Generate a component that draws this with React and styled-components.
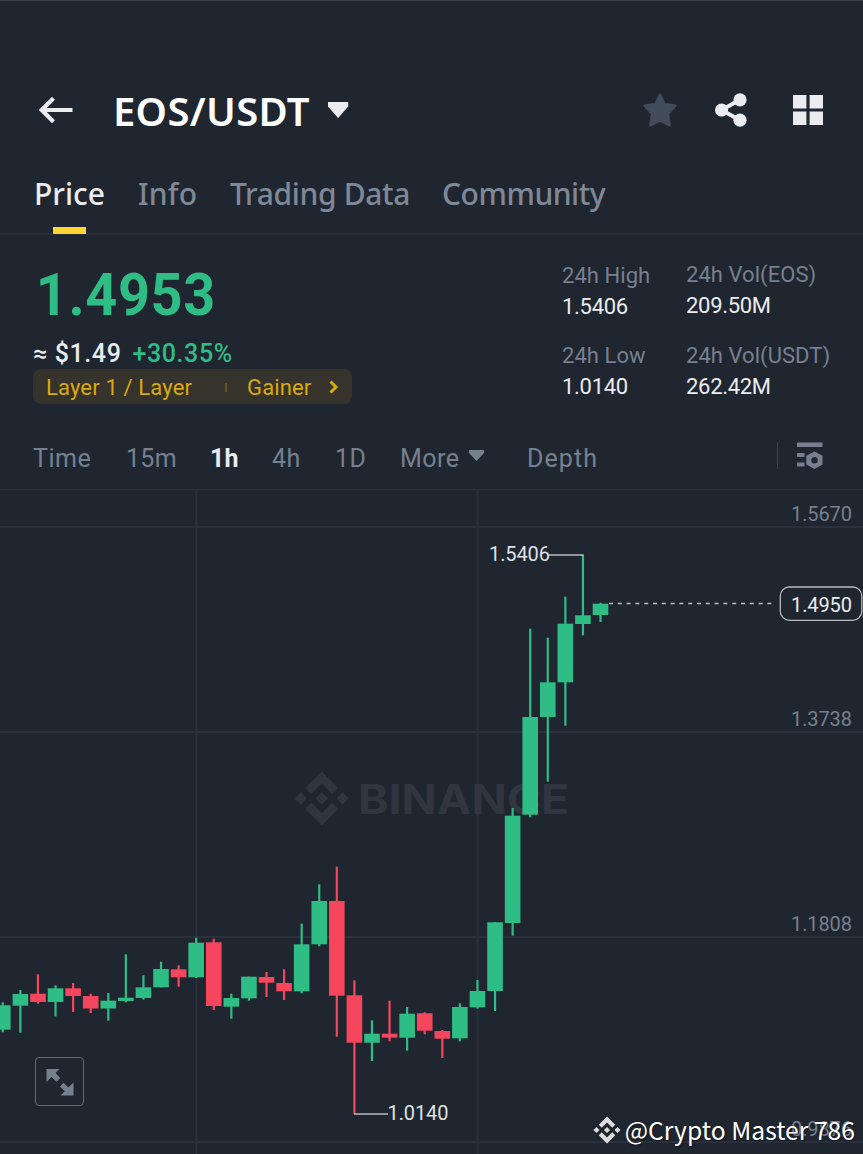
import { useState } from "react";
import styled, { createGlobalStyle } from "styled-components";

const GlobalStyle = createGlobalStyle`
  * {
    box-sizing: border-box;
  }
  body {
    margin: 0;
    background-color: #202630;
    font-family: Roboto, "Noto Sans", sans-serif;
  }
  button {
    padding: 0;
    border: none;
    background: none;
    font: inherit;
    color: inherit;
    text-align: left;
  }
  svg {
    display: block;
    flex: none;
  }
`;

const Screen = styled.div`
  display: flex;
  flex-direction: column;
  width: 863px;
  height: 1154px;
  overflow: hidden;
  white-space: nowrap;
  border-top: 1px solid #393f49;
`;

const Header = styled.header`
  display: flex;
  align-items: center;
  height: 82px;
  margin-top: 68px;
  padding: 0 40px 0 39px;
`;

const PairName = styled.h1`
  width: 213px;
  margin: 0 0 0 40px;
  padding-top: 2px;
  font-family: "Noto Sans", sans-serif;
  font-size: 40px;
  font-weight: 600;
  line-height: 40px;
  letter-spacing: 0.3px;
  color: #fff;
`;

const HeaderIcons = styled.div`
  display: flex;
  align-items: center;
  gap: 38px;
  margin-left: auto;
`;

const Tabs = styled.nav`
  display: flex;
  height: 84px;
  padding-left: 34px;
  border-bottom: 2px solid #292f3a;
`;

const Tab = styled.button`
  position: relative;
  width: ${(props) => props.$width}px;
  padding-top: 2px;
  font-family: "Noto Sans", sans-serif;
  font-size: 30px;
  font-weight: 500;
  letter-spacing: ${(props) => props.$spacing || 0}px;
  color: ${(props) => (props.$active ? "#eaecef" : "#7f8896")};

  &::after {
    content: "";
    display: ${(props) => (props.$active ? "block" : "none")};
    position: absolute;
    left: 19px;
    bottom: -1px;
    width: 33px;
    height: 7px;
    background-color: #fcd535;
  }
`;

const Summary = styled.section`
  display: flex;
  height: 189px;
  padding: 28px 0 0 33px;
`;

const PriceBlock = styled.div`
  width: 529px;
`;

const LastPrice = styled.div`
  padding-left: 3px;
  height: 72px;
  line-height: 64px;
  font-size: 60px;
  font-weight: 700;
  letter-spacing: 0.7px;
  color: #2ebd85;
  transform: scaleX(0.93);
  transform-origin: left;
`;

const PriceChange = styled.div`
  display: flex;
  gap: 11px;
  height: 34px;
  line-height: 38px;
  font-size: 25px;
  font-weight: 500;
  letter-spacing: 0.6px;
  color: #eaecef;
`;

const Percent = styled.span`
  color: #2ebd85;
`;

const Badge = styled.div`
  display: flex;
  align-items: center;
  width: 319px;
  height: 35px;
  padding: 1px 0 0 13px;
  border-radius: 8px;
  background-color: #36332c;
  font-size: 22px;
  letter-spacing: 0.15px;
  color: #d9aa0c;
`;

const BadgeLabel = styled.span`
  width: ${(props) => props.$width}px;
`;

const BadgeDivider = styled.span`
  width: 2px;
  height: 9px;
  margin-right: 20px;
  background-color: #66531f;
`;

const Stats = styled.div`
  display: grid;
  grid-template-columns: 124px 170px;
  grid-template-rows: 80px 80px;
  margin-top: -3px;
`;

const Stat = styled.div`
  margin-top: ${(props) => props.$shift || 0}px;
  font-size: 22px;
  line-height: 31px;
`;

const StatLabel = styled.div`
  letter-spacing: 0.05px;
  color: #76808f;
`;

const StatValue = styled.div`
  letter-spacing: -0.3px;
  color: #eaecef;
`;

const Intervals = styled.nav`
  display: flex;
  align-items: center;
  height: 66px;
  padding-left: 33px;
  border-bottom: 1px solid #292f3a;
`;

const Interval = styled.button`
  display: flex;
  align-items: center;
  gap: 9px;
  width: ${(props) => props.$width}px;
  padding-top: 3px;
  font-size: 25px;
  font-weight: ${(props) => (props.$active ? 700 : 400)};
  letter-spacing: ${(props) => props.$spacing ?? 0.5}px;
  color: ${(props) => (props.$active ? "#eaecef" : "#76808f")};

  svg {
    margin-top: -4px;
  }
`;

const IntervalDivider = styled.span`
  width: 1px;
  height: 27px;
  margin: -3px 19px 0 auto;
  background-color: #3a414d;
`;

const SettingsButton = styled.button`
  margin: -1px 40px 0 0;
`;

const ChartArea = styled.main`
  position: relative;
  height: 664px;
`;

const ExpandButton = styled.button`
  position: absolute;
  left: 35px;
  bottom: 48px;
  display: flex;
  align-items: center;
  justify-content: center;
  width: 49px;
  height: 49px;
  border: 1.5px solid #5f6876;
  border-radius: 4px;
`;

const Credit = styled.div`
  position: absolute;
  right: 8px;
  bottom: 7px;
  display: flex;
  align-items: center;
  gap: 4px;
  font-family: "Noto Sans CJK SC", sans-serif;
  font-size: 24.7px;
  line-height: 36px;
  color: #fff;
  text-shadow: 1px 1px 2px rgba(0, 0, 0, 0.5);
`;

const CreditName = styled.span`
  margin-top: -2px;
`;

const GREEN = "#2ebd85";
const RED = "#f6465d";

// [wick top, body top, body bottom, wick bottom, falling]
const candles = [
  [1002.5, 1005.3, 1029.7, 1032.3],
  [990, 994, 1005.7, 1032.7],
  [974.3, 993.7, 1002, 1003.7, true],
  [985.3, 988.3, 1002, 1016.3],
  [983, 988.3, 996, 1012, true],
  [993.7, 996, 1008.5, 1013, true],
  [993, 1000.7, 1008.5, 1020.7],
  [954.3, 997.7, 1001, 1002.3],
  [975.3, 987.3, 998, 999.7],
  [961.7, 969, 987.3, 987.3],
  [965.3, 969.3, 977.3, 986.7, true],
  [937.7, 942.7, 977.3, 978],
  [938.7, 942.3, 1006, 1010, true],
  [993.7, 998, 1006.7, 1018.7],
  [976.7, 976.7, 998.3, 1000.7],
  [972, 977, 982.7, 997, true],
  [969.3, 983, 991.3, 1000, true],
  [923.7, 944.3, 991.3, 993.3],
  [884.3, 901, 944.3, 946.3],
  [866.7, 901, 995.7, 1036.7, true],
  [980.3, 995.3, 1042.7, 1114, true],
  [1020.3, 1033.7, 1042.7, 1061],
  [1000.7, 1033.7, 1037.7, 1041.3, true],
  [1007, 1013.7, 1037.7, 1050.7],
  [1012.3, 1013.3, 1030.7, 1034.3, true],
  [1030, 1031, 1038.7, 1058, true],
  [1003.3, 1007, 1038.3, 1041.3],
  [980, 991, 1007.3, 1008.7],
  [922.3, 922.3, 991, 1011],
  [808, 815.7, 923, 935.7],
  [628.7, 717, 814.7, 817.3],
  [637.7, 682.3, 717, 781.7],
  [596.7, 623.7, 682.3, 725.7],
  [554.7, 615.3, 624, 635.3],
  [602.7, 603.7, 615, 622],
];

const priceLevels = [
  { y: 527, label: "1.5670" },
  { y: 732, label: "1.3738" },
  { y: 937, label: "1.1808" },
  { y: 1142, label: "0.9876" },
];

const tabs = [
  { name: "Price", width: 104 },
  { name: "Info", width: 92, spacing: 0.2 },
  { name: "Trading Data", width: 212, spacing: -0.35 },
  { name: "Community", width: 170, spacing: -0.45 },
];

const intervals = [
  { name: "Time", width: 93 },
  { name: "15m", width: 84, spacing: 0.3 },
  { name: "1h", width: 62, spacing: 0.2 },
  { name: "4h", width: 63 },
  { name: "1D", width: 65 },
  { name: "More", width: 127, menu: true },
  { name: "Depth", width: 90, spacing: 1.1 },
];

const BinanceMark = ({ color }) => (
  <g fill={color}>
    <path d="M-16.5-10.5 0-27 16.5-10.5 10.4-4.4 0-14.8-10.4-4.4z" />
    <path d="M-16.5 10.5 0 27 16.5 10.5 10.4 4.4 0 14.8-10.4 4.4z" />
    <path d="M0-6.1 6.1 0 0 6.1-6.1 0z" />
    <path d="M-21-6.1-14.9 0-21 6.1-27.1 0z" />
    <path d="M21-6.1 27.1 0 21 6.1 14.9 0z" />
  </g>
);

const Chart = () => (
  <svg width="863" height="664" viewBox="0 490 863 664">
    <g stroke="#2b313c" strokeWidth="1.8">
      {priceLevels.map((level) => (
        <path key={level.y} d={`M0 ${level.y}H863`} />
      ))}
      <path d="M196.3 490V1154M477.5 490V1154" />
    </g>
    <g transform="translate(321.7 798.4)">
      <BinanceMark color="#30353f" />
    </g>
    <text
      x="358"
      y="813.5"
      fill="#30353f"
      fontFamily="Inter, sans-serif"
      fontSize="41.5"
      fontWeight="700"
      textLength="211"
      lengthAdjust="spacingAndGlyphs"
    >
      BINANCE
    </text>
    {candles.map(([high, top, bottom, low, falling], i) => {
      const x = 2.8 + i * 17.58;
      return (
        <g key={i} fill={falling ? RED : GREEN}>
          <rect x={x - 1.1} y={high} width="2.2" height={low - high} />
          <rect x={x - 7.8} y={top} width="15.6" height={bottom - top} />
        </g>
      );
    })}
    <path d="M549 555H583.5M354 1114H388" stroke="#b7bbc1" strokeWidth="1.6" />
    <path d="M609 603.5H772" stroke="#b7bbc1" strokeWidth="1.7" strokeDasharray="4 4.8" />
    <g fontFamily="Roboto, sans-serif" fontSize="20">
      <g fill="#76808f">
        {priceLevels.map((level) => (
          <text key={level.y} x="791" y={level.y - 6} textLength="61">
            {level.label}
          </text>
        ))}
      </g>
      <g fill="#dfe1e5">
        <text x="489" y="561" textLength="61">
          1.5406
        </text>
        <text x="387.5" y="1120" textLength="61">
          1.0140
        </text>
      </g>
      <rect
        x="780.3"
        y="587"
        width="81.5"
        height="33.3"
        rx="9"
        fill="#202630"
        stroke="#b7bbc1"
        strokeWidth="1.3"
      />
      <text x="791" y="612" fill="#eaecef" textLength="61">
        1.4950
      </text>
    </g>
  </svg>
);

const App = () => {
  const [tab, setTab] = useState("Price");
  const [interval, setInterval] = useState("1h");

  return (
    <Screen>
      <GlobalStyle />
      <Header>
        <svg width="34" height="28" viewBox="0 0 34 28" fill="none" stroke="#eaecef" strokeWidth="4.2">
          <path d="M3 14H33.5M14.5 2.3 2.8 14 14.5 25.7" />
        </svg>
        <PairName>EOS/USDT</PairName>
        <svg width="23" height="17" viewBox="-1 0 23 17" fill="#eaecef">
          <path d="M1 0H21.2V4.5L11.1 16 1 4.5z" />
        </svg>
        <HeaderIcons>
          <svg width="34" height="34" viewBox="0 0 34 34" fill="#434c5a" stroke="#434c5a">
            <path
              strokeWidth="3"
              strokeLinejoin="round"
              d="M17 2 21.4 11.6 32 12.8 24.6 20.6 26.3 32 17 27.2 7.7 32 9.4 20.6 2 12.8 12.6 11.6z"
            />
          </svg>
          <svg width="32" height="34" viewBox="0 0 32 34" fill="#eaecef">
            <path d="M25 6.8 6.6 17 25 27.2" fill="none" stroke="#eaecef" strokeWidth="4" />
            <circle cx="6.6" cy="17" r="6.6" />
            <circle cx="25" cy="6.8" r="6.6" />
            <circle cx="25" cy="27.2" r="6.6" />
          </svg>
          <svg width="38" height="30" viewBox="-8 0 38 30" fill="#eaecef">
            <path d="M0 0H13.4V13.4H0zM16.6 0H30V13.4H16.6zM0 16.6H13.4V30H0zM16.6 16.6H30V30H16.6z" />
          </svg>
        </HeaderIcons>
      </Header>
      <Tabs>
        {tabs.map((el) => (
          <Tab
            key={el.name}
            $width={el.width}
            $spacing={el.spacing}
            $active={el.name === tab}
            onClick={() => setTab(el.name)}
          >
            {el.name}
          </Tab>
        ))}
      </Tabs>
      <Summary>
        <PriceBlock>
          <LastPrice>1.4953</LastPrice>
          <PriceChange>
            <span>≈ $1.49</span>
            <Percent>+30.35%</Percent>
          </PriceChange>
          <Badge>
            <BadgeLabel $width={179}>Layer 1 / Layer</BadgeLabel>
            <BadgeDivider />
            <BadgeLabel $width={82}>Gainer</BadgeLabel>
            <svg width="10" height="14" viewBox="0 0 10 14" fill="none" stroke="#d9aa0c" strokeWidth="3">
              <path d="M1.5 1.5 7 7 1.5 12.5" />
            </svg>
          </Badge>
        </PriceBlock>
        <Stats>
          <Stat>
            <StatLabel>24h High</StatLabel>
            <StatValue>1.5406</StatValue>
          </Stat>
          <Stat $shift={-1}>
            <StatLabel>24h Vol(EOS)</StatLabel>
            <StatValue>209.50M</StatValue>
          </Stat>
          <Stat>
            <StatLabel>24h Low</StatLabel>
            <StatValue>1.0140</StatValue>
          </Stat>
          <Stat>
            <StatLabel>24h Vol(USDT)</StatLabel>
            <StatValue>262.42M</StatValue>
          </Stat>
        </Stats>
      </Summary>
      <Intervals>
        {intervals.map((el) => (
          <Interval
            key={el.name}
            $width={el.width}
            $spacing={el.spacing}
            $active={el.name === interval}
            onClick={() => setInterval(el.name)}
          >
            {el.name}
            {el.menu && (
              <svg width="15" height="12" viewBox="0 0 15 12" fill="#76808f">
                <path d="M0 0H15V3L7.5 11 0 3z" />
              </svg>
            )}
          </Interval>
        ))}
        <IntervalDivider />
        <SettingsButton>
          <svg width="26" height="28" viewBox="0 0 26 28" fill="#76808f">
            <path d="M0 .5H25.5V5H0zM0 11H7.5V15H0zM0 20.5H7.5V24.5H0z" />
            <path
              fillRule="evenodd"
              d="M17.5 9.5 25.5 13.8V22.6L17.5 27 9.3 22.6V13.8zM17.5 15A3.2 3.2 0 1 0 17.5 21.4 3.2 3.2 0 1 0 17.5 15z"
            />
          </svg>
        </SettingsButton>
      </Intervals>
      <ChartArea>
        <Chart />
        <ExpandButton>
          <svg width="28" height="28" viewBox="0 0 28 28" fill="#76808f">
            <path d="M.5 1H13.5L9.5 5 14.2 10 10.5 13.7 5.5 9 .5 14z" />
            <path d="M27.5 27.5H14.5L18.8 23.2 14 18.5 17.5 14.8 22.3 19.6 27.5 14.5z" />
          </svg>
        </ExpandButton>
        <Credit>
          <svg width="28" height="28" viewBox="-28 -28 56 56">
            <BinanceMark color="#dcdcdc" />
          </svg>
          <CreditName>@Crypto Master 786</CreditName>
        </Credit>
      </ChartArea>
    </Screen>
  );
};

export default App;
